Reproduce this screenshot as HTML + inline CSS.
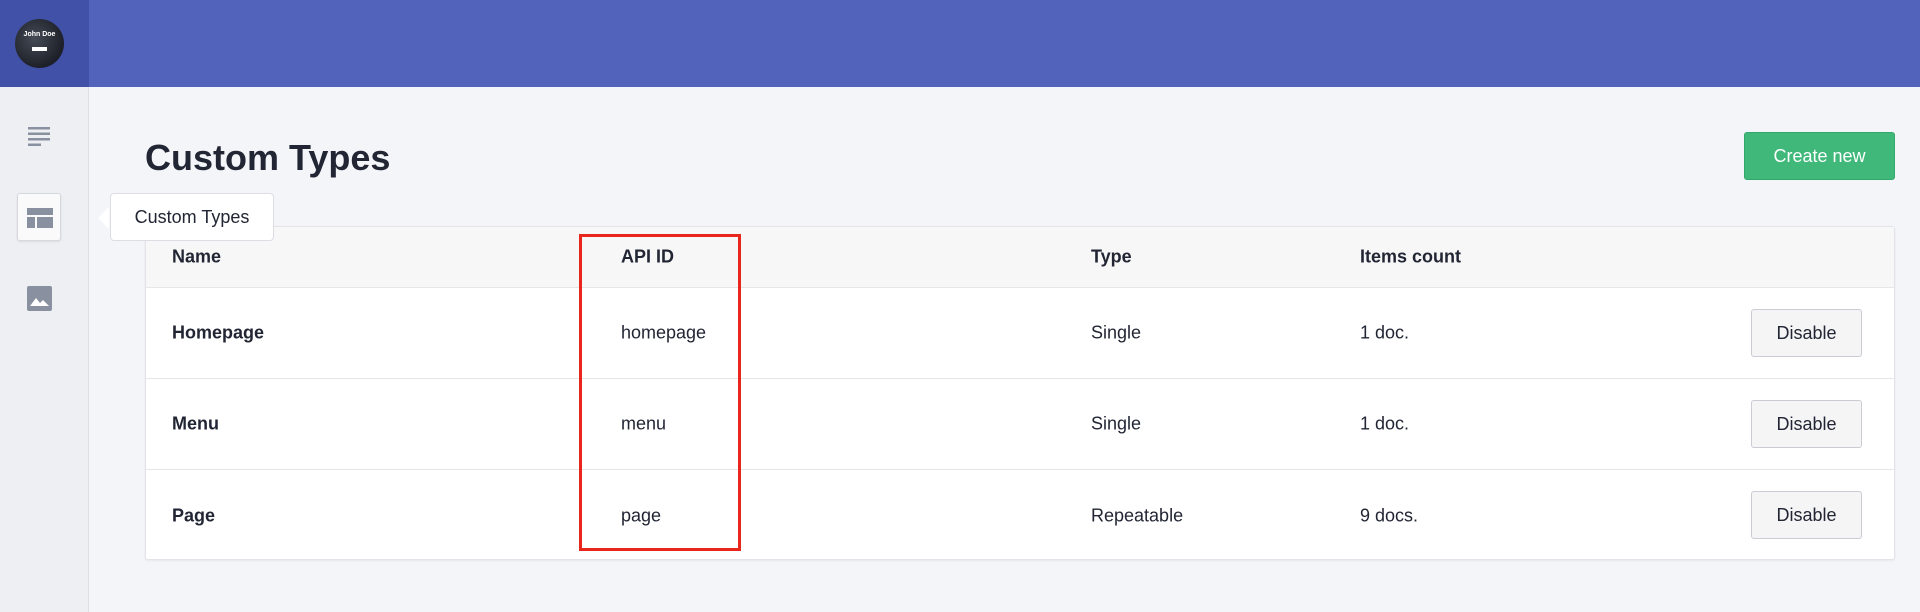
<!DOCTYPE html>
<html><head><style>
*{margin:0;padding:0;box-sizing:border-box}
body{width:1920px;height:612px;background:#f4f5f8;font-family:"Liberation Sans",sans-serif;color:#222634;position:relative;overflow:hidden}
.hdr{position:absolute;left:0;top:0;width:1920px;height:87px;background:#5163ba}
.hdrl{position:absolute;left:0;top:0;width:89px;height:87px;background:#4151a8}
.side{position:absolute;left:0;top:87px;width:89px;height:525px;background:#eeeff2;border-right:1px solid #dcdee4}
.av{position:absolute;left:15px;top:19px;width:49px;height:49px;border-radius:50%;background:radial-gradient(circle at 40% 40%,#454a55,#1d2028 70%);color:#fff;font-size:7px;font-weight:bold;text-align:center;padding-top:12px}
.av i{display:block;width:15px;height:4px;background:#fff;margin:9px auto 0}
h1{position:absolute;left:145px;top:137px;font-size:36px;font-weight:bold;color:#222634}
.btn{position:absolute;left:1744px;top:132px;width:151px;height:48px;background:#3fb87a;border:1px solid #34a86c;border-radius:3px;color:#fff;font-size:18px;text-align:center;line-height:46px}
.tbl{position:absolute;left:145px;top:226px;width:1750px;height:334px;background:#fff;border:1px solid #e2e4e9;border-radius:3px;box-shadow:0 1px 2px rgba(0,0,0,.06)}
.th{height:61px;background:#f7f7f8;border-bottom:1px solid #dfe1e6}
.row{height:91px;border-bottom:1px solid #e4e6ea;position:relative}
.row:last-child{border-bottom:none}
.c{position:absolute;font-size:18px;top:50%;transform:translateY(-50%)}
.b{font-weight:bold}
.dis{position:absolute;left:1605px;top:21px;width:111px;height:48px;background:#f5f5f6;border:1px solid #c9ccd3;border-radius:3px;text-align:center;line-height:46px;font-size:18px}
.red{position:absolute;left:579px;top:234px;width:162px;height:317px;border:3px solid #e8261c}
.tip{position:absolute;z-index:5;left:110px;top:193px;width:164px;height:48px;background:#fff;border:1px solid #dcdee4;border-radius:4px;font-size:18px;line-height:46px;text-align:center}
.tip:before{content:"";position:absolute;left:-13px;top:13px;border:11px solid transparent;border-right-color:#fff;border-left:0;width:0;height:0}
.ctb{position:absolute;left:17px;top:193px;width:44px;height:48px;background:#fafafa;border:1px solid #d5d8de;border-radius:3px;box-shadow:0 1px 2px rgba(0,0,0,.08)}
</style></head><body>
<div class="hdr"></div><div class="hdrl"><div class="av">John Doe<i></i></div></div>
<div class="side"></div>
<svg style="position:absolute;left:28px;top:127px" width="24" height="20"><g fill="#8990a0"><rect x="0" y="0" width="22" height="2.5"/><rect x="0" y="5.5" width="22" height="2.5"/><rect x="0" y="11" width="22" height="2.5"/><rect x="0" y="16.5" width="13" height="2.5"/></g></svg>
<div class="ctb"><svg style="position:absolute;left:9px;top:14px" width="26" height="20"><g fill="#8990a0"><rect x="0" y="0" width="26" height="7"/><rect x="0" y="9" width="8" height="11"/><rect x="10" y="9" width="16" height="11"/></g></svg></div>
<svg style="position:absolute;left:27px;top:286px" width="25" height="25"><rect width="25" height="25" rx="2" fill="#8990a0"/><path d="M3 20 L9 12 L13 17 L16 14 L22 20Z" fill="#fff"/></svg>
<h1>Custom Types</h1>
<div class="btn">Create new</div>
<div class="tbl">
<div class="th row" style="height:61px"><span class="c b" style="left:26px">Name</span><span class="c b" style="left:475px">API ID</span><span class="c b" style="left:945px">Type</span><span class="c b" style="left:1214px">Items count</span></div>
<div class="row"><span class="c b" style="left:26px">Homepage</span><span class="c" style="left:475px">homepage</span><span class="c" style="left:945px">Single</span><span class="c" style="left:1214px">1 doc.</span><div class="dis">Disable</div></div>
<div class="row"><span class="c b" style="left:26px">Menu</span><span class="c" style="left:475px">menu</span><span class="c" style="left:945px">Single</span><span class="c" style="left:1214px">1 doc.</span><div class="dis">Disable</div></div>
<div class="row"><span class="c b" style="left:26px">Page</span><span class="c" style="left:475px">page</span><span class="c" style="left:945px">Repeatable</span><span class="c" style="left:1214px">9 docs.</span><div class="dis">Disable</div></div>
</div>
<div class="tip">Custom Types</div>
<div class="red"></div>
</body></html>
